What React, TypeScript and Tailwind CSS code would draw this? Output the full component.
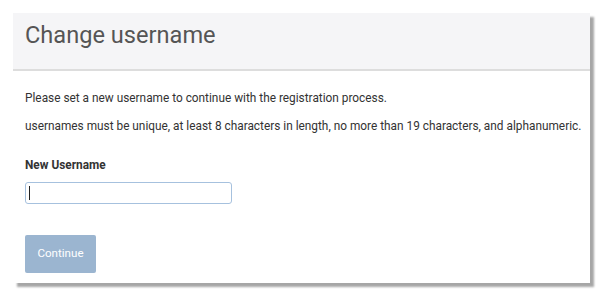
import React from "react";

export default function App() {
  return (
    <div className="w-[600px] h-[303px] bg-white pt-[13px] pl-[13px]" style={{ fontFamily: "Roboto, 'Liberation Sans', sans-serif" }}>
      <div className="w-[577px] h-[270px] bg-white flex flex-col shadow-[4px_4px_2px_rgba(0,0,0,0.35)]">
        <div className="h-[58px] bg-[#f5f5f7] border-b-2 border-[#dddddd] pl-[12px] pt-[8px]">
          <h1 className="text-[23.6px] text-[#555555] leading-[28px]">Change username</h1>
        </div>
        <div className="pl-[12px] pt-[17px] text-[#333333] text-[11.85px]">
          <p className="leading-[20px]">Please set a new username to continue with the registration process.</p>
          <p className="leading-[20px] mt-[8px] whitespace-nowrap">usernames must be unique, at least 8 characters in length, no more than 19 characters, and alphanumeric.</p>
          <label className="block font-bold leading-[20px] mt-[19px]">New Username</label>
          <div className="mt-[7px] w-[207px] h-[22px] border border-[#a6c1de] rounded-[3px] flex items-center pl-[3px]">
            <div className="w-px h-[14px] bg-[#222]"></div>
          </div>
          <button className="mt-[31px] w-[71px] h-[38px] bg-[#9bb5d0] text-white text-[11.6px] rounded-[2px]">Continue</button>
        </div>
      </div>
    </div>
  );
}
